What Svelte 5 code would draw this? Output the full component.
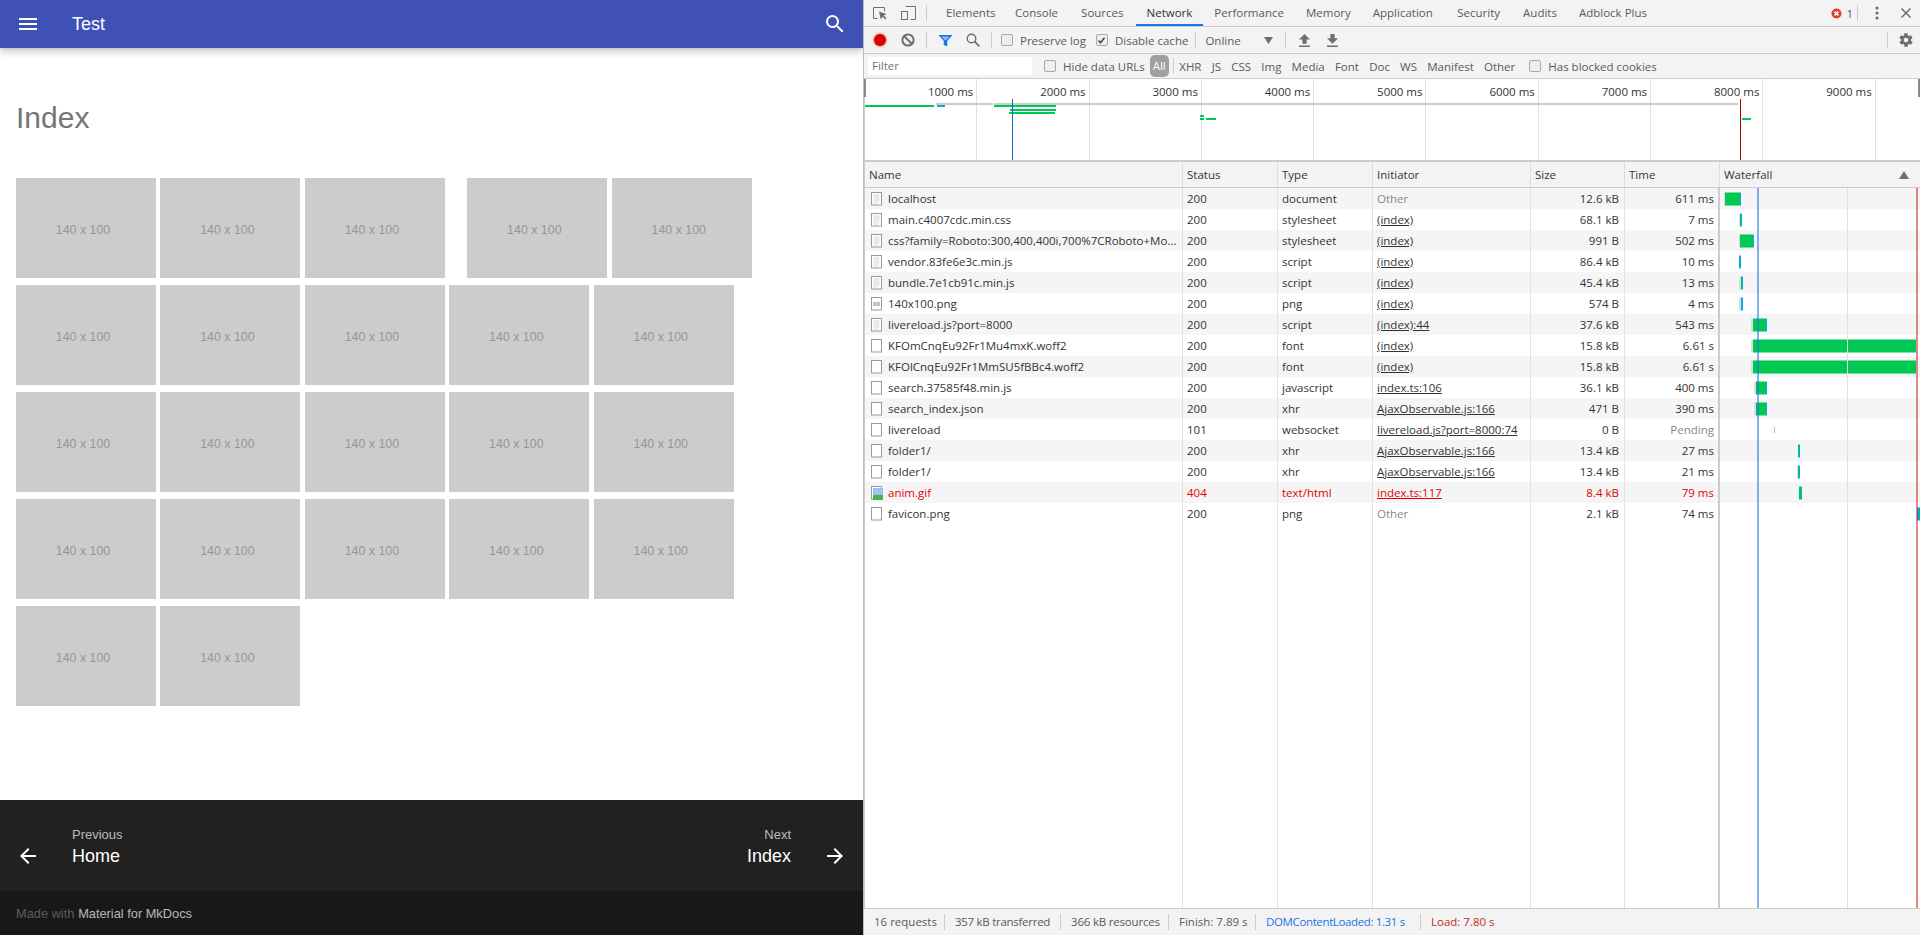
<script lang="ts">
	const tileRows = [5, 5, 5, 5, 2];

	const tabs = ['Elements', 'Console', 'Sources', 'Network', 'Performance', 'Memory', 'Application', 'Security', 'Audits', 'Adblock Plus'];
	const filters = ['XHR', 'JS', 'CSS', 'Img', 'Media', 'Font', 'Doc', 'WS', 'Manifest', 'Other'];
	const ticks = [1000, 2000, 3000, 4000, 5000, 6000, 7000, 8000, 9000];

	const green = '#00c853';
	const blue = '#03a9f4';
	const wait = '#dcdcdc';

	// overview strips, in pixels from the left of the overview
	const strips = [
		{ x: 0, y: 26, w: 69, h: 2, c: green },
		{ x: 72, y: 26, w: 8, h: 2, c: '#12a9d8' },
		{ x: 129, y: 26, w: 62, h: 2, c: green },
		{ x: 145, y: 30, w: 46, h: 2, c: green },
		{ x: 144, y: 33, w: 46, h: 2, c: green },
		{ x: 335, y: 36, w: 4, h: 2, c: green },
		{ x: 335, y: 39, w: 4, h: 2, c: green },
		{ x: 341, y: 39, w: 10, h: 2, c: green },
		{ x: 877, y: 39, w: 9, h: 2, c: green },
	];

	// waterfall segments: left, width, colour (and height when not a full bar)
	const rows = [
		{ name: 'localhost', status: '200', type: 'document', init: 'Other', size: '12.6 kB', time: '611 ms', icon: 'doc', bars: [[4, 2, wait], [5, 15, green], [20, 1, blue]] },
		{ name: 'main.c4007cdc.min.css', status: '200', type: 'stylesheet', init: '(index)', size: '68.1 kB', time: '7 ms', icon: 'doc', bars: [[19, 1, wait], [20, 1, green], [21, 1, blue]] },
		{ name: 'css?family=Roboto:300,400,400i,700%7CRoboto+Mo...', status: '200', type: 'stylesheet', init: '(index)', size: '991 B', time: '502 ms', icon: 'doc', bars: [[19, 1, wait], [20, 13, green], [33, 1, blue]] },
		{ name: 'vendor.83fe6e3c.min.js', status: '200', type: 'script', init: '(index)', size: '86.4 kB', time: '10 ms', icon: 'doc', bars: [[19, 2, blue]] },
		{ name: 'bundle.7e1cb91c.min.js', status: '200', type: 'script', init: '(index)', size: '45.4 kB', time: '13 ms', icon: 'doc', bars: [[19, 2, wait], [21, 1, green], [22, 1, blue]] },
		{ name: '140x100.png', status: '200', type: 'png', init: '(index)', size: '574 B', time: '4 ms', icon: 'png', bars: [[19, 2, wait], [21, 2, blue]] },
		{ name: 'livereload.js?port=8000', status: '200', type: 'script', init: '(index):44', size: '37.6 kB', time: '543 ms', icon: 'doc', bars: [[31, 2, wait], [33, 13, green], [46, 1, blue]] },
		{ name: 'KFOmCnqEu92Fr1Mu4mxK.woff2', status: '200', type: 'font', init: '(index)', size: '15.8 kB', time: '6.61 s', icon: 'blank', bars: [[31, 2, wait], [33, 163, green]] },
		{ name: 'KFOlCnqEu92Fr1MmSU5fBBc4.woff2', status: '200', type: 'font', init: '(index)', size: '15.8 kB', time: '6.61 s', icon: 'blank', bars: [[31, 2, wait], [33, 163, green]] },
		{ name: 'search.37585f48.min.js', status: '200', type: 'javascript', init: 'index.ts:106', size: '36.1 kB', time: '400 ms', icon: 'blank', bars: [[34, 2, wait], [36, 10, green], [46, 1, blue]] },
		{ name: 'search_index.json', status: '200', type: 'xhr', init: 'AjaxObservable.js:166', size: '471 B', time: '390 ms', icon: 'blank', bars: [[34, 2, wait], [36, 10, green], [46, 1, blue]] },
		{ name: 'livereload', status: '101', type: 'websocket', init: 'livereload.js?port=8000:74', size: '0 B', time: 'Pending', icon: 'blank', bars: [[54, 1, '#bbb', 6]] },
		{ name: 'folder1/', status: '200', type: 'xhr', init: 'AjaxObservable.js:166', size: '13.4 kB', time: '27 ms', icon: 'blank', bars: [[78, 1, green], [79, 1, blue]] },
		{ name: 'folder1/', status: '200', type: 'xhr', init: 'AjaxObservable.js:166', size: '13.4 kB', time: '21 ms', icon: 'blank', bars: [[77, 1, wait], [78, 1, green], [79, 1, blue]] },
		{ name: 'anim.gif', status: '404', type: 'text/html', init: 'index.ts:117', size: '8.4 kB', time: '79 ms', icon: 'img', bars: [[79, 2, green], [81, 1, blue]], error: true },
		{ name: 'favicon.png', status: '200', type: 'png', init: 'Other', size: '2.1 kB', time: '74 ms', icon: 'blank', bars: [[197, 3, '#00acc1']] },
	];

	const statusItems = ['16 requests', '357 kB transferred', '366 kB resources', 'Finish: 7.89 s'];
</script>

<div class="screen">
	<section class="page">
		<header class="bar">
			<svg class="bar-icon" viewBox="0 0 24 24"><path d="M3 18h18v-2H3v2zm0-5h18v-2H3v2zm0-7v2h18V6H3z" /></svg>
			<span class="bar-title">Test</span>
			<svg class="bar-icon search" viewBox="0 0 24 24"><path d="M15.5 14h-.79l-.28-.27A6.47 6.47 0 0 0 16 9.5 6.5 6.5 0 1 0 9.5 16c1.61 0 3.09-.59 4.23-1.57l.27.28v.79l5 4.99L20.49 19l-4.99-5zm-6 0C7.01 14 5 11.99 5 9.5S7.01 5 9.5 5 14 7.01 14 9.5 11.99 14 9.5 14z" /></svg>
		</header>

		<main class="content">
			<h1>Index</h1>
			<div class="tiles">
				{#each tileRows as count, r}
					{#each Array(count) as _, i}
						<div class="tile" class:pushed={r === 0 && i === 3}>140 x 100</div>
					{/each}
				{/each}
			</div>
		</main>

		<footer>
			<nav class="pager">
				<div class="pager-link">
					<svg class="pager-icon" viewBox="0 0 24 24"><path d="M20 11H7.83l5.59-5.59L12 4l-8 8 8 8 1.41-1.41L7.83 13H20v-2z" /></svg>
					<div>
						<div class="pager-dir">Previous</div>
						<div class="pager-title">Home</div>
					</div>
				</div>
				<div class="pager-link right">
					<div>
						<div class="pager-dir">Next</div>
						<div class="pager-title">Index</div>
					</div>
					<svg class="pager-icon" viewBox="0 0 24 24"><path d="M12 4l-1.41 1.41L16.17 11H4v2h12.17l-5.58 5.59L12 20l8-8z" /></svg>
				</div>
			</nav>
			<div class="meta">Made with <span>Material for MkDocs</span></div>
		</footer>
	</section>

	<section class="devtools">
		<div class="tabbar">
			<div class="tb-btn">
				<svg width="16" height="16" viewBox="0 0 16 16" fill="none" stroke="#6e6e6e"><path d="M5.5 13.5h-4v-11h11v4" /><path d="M7 6.5l1.8 8 1.7-2.7 3 2.7 1-1-2.8-2.9 2.8-1.6z" fill="#6e6e6e" stroke="none" /></svg>
			</div>
			<div class="tb-btn">
				<svg width="17" height="16" viewBox="0 0 17 16" fill="none" stroke="#6e6e6e"><path d="M5.5 1.5h10v13h-5" /><rect x="1.5" y="6.5" width="6" height="8" /></svg>
			</div>
			<i class="sep tab-sep"></i>
			{#each tabs as tab}
				<div class="tab" class:active={tab === 'Network'}>{tab}</div>
			{/each}
			<div class="errors">
				<svg width="11" height="11" viewBox="0 0 11 11"><circle cx="5.5" cy="5.5" r="5" fill="#e53935" /><path d="M3.6 3.6l3.8 3.8M7.4 3.6l-3.8 3.8" stroke="#fff" stroke-width="1.6" /></svg>
				<span>1</span>
			</div>
			<i class="sep"></i>
			<div class="tb-btn dots">
				<svg width="4" height="14" viewBox="0 0 4 14" fill="#6e6e6e"><circle cx="2" cy="2" r="1.6" /><circle cx="2" cy="7" r="1.6" /><circle cx="2" cy="12" r="1.6" /></svg>
			</div>
			<div class="tb-btn">
				<svg width="12" height="12" viewBox="0 0 12 12" stroke="#6e6e6e" stroke-width="1.5"><path d="M1.5 1.5l9 9M10.5 1.5l-9 9" /></svg>
			</div>
		</div>

		<div class="toolbar">
			<div class="tb-btn"><span class="record"></span></div>
			<div class="tb-btn">
				<svg width="14" height="14" viewBox="0 0 14 14" fill="none" stroke="#6e6e6e" stroke-width="2"><circle cx="7" cy="7" r="5.6" /><path d="M3 3l8 8" /></svg>
			</div>
			<i class="sep"></i>
			<div class="tb-btn">
				<svg width="15" height="13" viewBox="0 0 15 13"><path d="M.5 1h14L9.2 7v5.5L5.8 11V7z" fill="#1a73e8" /><path d="M3.5 2.4h8L8.4 6H6.6z" fill="#8ab8f2" /></svg>
			</div>
			<div class="tb-btn">
				<svg width="14" height="14" viewBox="0 0 14 14" fill="none" stroke="#6e6e6e" stroke-width="1.4"><circle cx="5.5" cy="5.5" r="4.3" /><path d="M8.7 8.7l4.6 4.6" stroke-width="1.8" /></svg>
			</div>
			<i class="sep"></i>
			<span class="check first"></span><span class="check-label">Preserve log</span>
			<span class="check second"><svg width="9" height="9" viewBox="0 0 9 9" fill="none" stroke="#444" stroke-width="1.6"><path d="M1.5 4.5l2 2.2 4-5" /></svg></span><span class="check-label">Disable cache</span>
			<i class="sep after-cache"></i>
			<span class="throttle">Online<svg width="9" height="7" viewBox="0 0 9 7"><path d="M0 0h9L4.5 7z" fill="#6e6e6e" /></svg></span>
			<i class="sep"></i>
			<div class="tb-btn">
				<svg width="11" height="13" viewBox="0 0 11 13" fill="#6e6e6e"><path d="M5.5 0L11 5.5H7.6v4.3H3.4V5.5H0zM0 11.4h11V13H0z" /></svg>
			</div>
			<div class="tb-btn">
				<svg width="11" height="13" viewBox="0 0 11 13" fill="#6e6e6e"><path d="M5.5 9.8L11 4.3H7.6V0H3.4v4.3H0zM0 11.4h11V13H0z" /></svg>
			</div>
			<i class="sep push"></i>
			<div class="tb-btn">
				<svg width="16" height="16" viewBox="0 0 24 24" fill="#6e6e6e"><path d="M19.4 13a7.5 7.5 0 0 0 0-2l2.1-1.6a.5.5 0 0 0 .1-.6l-2-3.5a.5.5 0 0 0-.6-.2l-2.5 1a7.3 7.3 0 0 0-1.7-1l-.4-2.7a.5.5 0 0 0-.5-.4h-4a.5.5 0 0 0-.5.4l-.4 2.7a7.3 7.3 0 0 0-1.7 1l-2.5-1a.5.5 0 0 0-.6.2l-2 3.5a.5.5 0 0 0 .1.6L4.6 11a7.5 7.5 0 0 0 0 2l-2.1 1.6a.5.5 0 0 0-.1.6l2 3.5c.1.2.4.3.6.2l2.5-1a7.3 7.3 0 0 0 1.7 1l.4 2.7c0 .2.2.4.5.4h4c.3 0 .5-.2.5-.4l.4-2.7a7.3 7.3 0 0 0 1.7-1l2.5 1c.2.1.5 0 .6-.2l2-3.5a.5.5 0 0 0-.1-.6zM12 15.5a3.5 3.5 0 1 1 0-7 3.5 3.5 0 0 1 0 7z" /></svg>
			</div>
		</div>

		<div class="filterbar">
			<div class="filter-input">Filter</div>
			<span class="check"></span><span class="check-label">Hide data URLs</span>
			<span class="pill">All</span>
			<i class="sep"></i>
			<div class="filter-types">
				{#each filters as f}
					<span>{f}</span>
				{/each}
			</div>
			<span class="check"></span><span class="check-label">Has blocked cookies</span>
		</div>

		<div class="overview">
			{#each ticks as t, i}
				<div class="ov-tick" style="left: {i * 112.3}px; width: 112.3px">{t} ms</div>
			{/each}
			<span class="ov-rule" style="left: 71px; width: 57px"></span>
			<span class="ov-rule" style="left: 129px; width: 744px"></span>
			{#each strips as s}
				<span class="ov-strip" style="left: {s.x}px; top: {s.y}px; width: {s.w}px; height: {s.h}px; background: {s.c}"></span>
			{/each}
			<span class="ov-line dcl"></span>
			<span class="ov-line load"></span>
			<span class="ov-handle"></span>
			<span class="ov-handle end"></span>
		</div>

		<div class="thead">
			<div>Name</div>
			<div>Status</div>
			<div>Type</div>
			<div>Initiator</div>
			<div>Size</div>
			<div>Time</div>
			<div class="wf-head">Waterfall<svg width="10" height="8" viewBox="0 0 10 8"><path d="M0 8h10L5 0z" fill="#6e6e6e" /></svg></div>
		</div>

		<div class="tbody">
			{#each rows as row}
				<div class="row" class:error={row.error}>
					<div class="cell name">
						<svg class="file" width="13" height="15" viewBox="0 0 13 15">
							<rect x="1.5" y="1.5" width="10" height="12.5" fill="#fff" stroke="#9a9a9a" />
							{#if row.icon === 'doc'}
								<path d="M3.5 4h6M3.5 6h6M3.5 8h6M3.5 10h6M3.5 12h4" stroke="#d4d4d4" />
							{:else if row.icon === 'png'}
								<rect x="3" y="6" width="7" height="4" fill="#c4c4c4" />
							{:else if row.icon === 'img'}
								<rect x="3" y="3" width="10" height="8" fill="#9cc4ec" />
								<rect x="3" y="10" width="10" height="5" fill="#4caf50" />
							{/if}
						</svg>
						<span>{row.name}</span>
					</div>
					<div class="cell">{row.status}</div>
					<div class="cell">{row.type}</div>
					<div class="cell" class:other={row.init === 'Other'}><span class:link={row.init !== 'Other'}>{row.init}</span></div>
					<div class="cell num">{row.size}</div>
					<div class="cell num" class:other={row.time === 'Pending'}>{row.time}</div>
					<div class="cell wf">
						{#each row.bars as b}
							<span class="wf-bar" style="left: {b[0]}px; width: {b[1]}px; height: {b[3] ?? 13}px; background: {b[2]}"></span>
						{/each}
					</div>
				</div>
			{/each}
			<div class="col-lines">
				<i></i><i></i><i></i><i></i><i></i><i></i>
				<i class="wf-lines">
					<b class="wf-grid"></b>
					<b class="wf-dcl"></b>
					<b class="wf-load"></b>
				</i>
			</div>
		</div>

		<div class="status">
			{#each statusItems as item}
				<span class="status-item">{item}</span>
			{/each}
			<span class="status-item dcl-text">DOMContentLoaded: 1.31 s</span>
			<span class="status-item load-text">Load: 7.80 s</span>
		</div>
	</section>
</div>

<style>
	:global(body) {
		margin: 0;
		background: #fff;
	}

	.screen {
		display: flex;
		width: 1920px;
		height: 935px;
		overflow: hidden;
	}

	/* left: the docs page */
	.page {
		width: 863px;
		flex: none;
		display: flex;
		flex-direction: column;
		font-family: 'Liberation Sans', Arial, sans-serif;
		position: relative;
	}

	.bar {
		height: 48px;
		flex: none;
		background: #3f51b5;
		display: flex;
		align-items: center;
		padding: 0 16px;
		color: #fff;
		box-shadow: 0 0 4px rgba(0, 0, 0, 0.1), 0 4px 8px rgba(0, 0, 0, 0.2);
		position: relative;
		z-index: 1;
	}

	.bar-icon {
		width: 24px;
		height: 24px;
		fill: #fff;
	}

	.bar-icon.search {
		margin-left: auto;
	}

	.bar-title {
		margin-left: 32px;
		font-size: 18px;
	}

	.content {
		flex: 1;
		padding: 0 16px;
	}

	h1 {
		margin: 53px 0 0;
		height: 77px;
		font-size: 30px;
		line-height: 34px;
		font-weight: 400;
		color: #757575;
	}

	.tiles {
		display: flex;
		flex-wrap: wrap;
		gap: 7px 4.45px;
	}

	.tile {
		width: 140px;
		height: 100px;
		background: #ccc;
		color: #969696;
		font-size: 12.4px;
		display: flex;
		align-items: center;
		justify-content: center;
		padding: 3px 6px 0 0;
		box-sizing: border-box;
	}

	.tile.pushed {
		margin-left: 18px;
	}

	.pager {
		height: 91px;
		background: #212121;
		display: flex;
		justify-content: space-between;
		align-items: center;
		padding: 4px 16px 0;
		box-sizing: border-box;
		color: #fff;
	}

	.pager-link {
		display: flex;
		align-items: flex-end;
		gap: 32px;
	}

	.pager-link.right {
		text-align: right;
	}

	.pager-icon {
		width: 24px;
		height: 24px;
		fill: #fff;
		margin-bottom: 1px;
	}

	.pager-dir {
		font-size: 13px;
		line-height: 16px;
		color: rgba(255, 255, 255, 0.7);
	}

	.pager-title {
		font-size: 18px;
		line-height: 26px;
	}

	.meta {
		height: 44px;
		background: #181818;
		padding: 0 16px;
		display: flex;
		align-items: center;
		gap: 0.3em;
		font-size: 12.8px;
		color: rgba(255, 255, 255, 0.3);
	}

	.meta span {
		color: rgba(255, 255, 255, 0.7);
	}

	/* right: devtools */
	.devtools {
		flex: 1;
		min-width: 0;
		border-left: 1px solid #bbb;
		display: flex;
		flex-direction: column;
		font-family: 'Open Sans', 'Noto Sans', sans-serif;
		font-size: 11.5px;
		color: #333;
		background: #fff;
		position: relative;
		z-index: 2;
	}

	.tabbar,
	.toolbar,
	.filterbar {
		flex: none;
		display: flex;
		align-items: center;
		background: #f3f3f3;
		border-bottom: 1px solid #ccc;
		color: #5a5a5a;
		box-sizing: border-box;
	}

	.tabbar {
		height: 27px;
		padding-left: 2px;
	}

	.toolbar {
		height: 27px;
		padding-left: 2px;
	}

	.filterbar {
		height: 25px;
		padding-left: 4px;
	}

	.tb-btn {
		width: 28px;
		height: 26px;
		flex: none;
		display: grid;
		place-items: center;
	}

	.sep {
		width: 1px;
		height: 16px;
		flex: none;
		background: #ccc;
		margin: 0 4px;
	}

	.tab-sep {
		margin-right: 8px;
	}

	.tab {
		height: 26px;
		line-height: 26px;
		padding: 0 11px;
		box-sizing: border-box;
	}

	/* the browser's text is a touch narrower or wider per word than ours */
	.tab:nth-child(4) {
		padding-right: 8.6px;
	}

	.tab:nth-child(5),
	.tab:nth-child(6) {
		padding-right: 12px;
	}

	.tab:nth-child(11) {
		margin-left: 2.5px;
	}

	.tab:nth-child(12) {
		margin-left: 1px;
	}

	.tab.active {
		color: #333;
		border-bottom: 2px solid #1a73e8;
	}

	.errors {
		margin-left: auto;
		display: flex;
		align-items: center;
		gap: 4px;
		color: #5a5a5a;
	}

	.dots {
		width: 30px;
	}

	.record {
		width: 12px;
		height: 12px;
		border-radius: 50%;
		background: #e00000;
		box-shadow: 0 0 2px 1px rgba(220, 0, 0, 0.35);
	}

	.check {
		width: 10px;
		height: 10px;
		flex: none;
		border: 1px solid #a8a8a8;
		border-radius: 2px;
		background: #eee;
		margin-right: 7px;
		display: grid;
		place-items: center;
	}

	.check.first {
		margin-left: 5px;
	}

	.check.second {
		margin-left: 10px;
	}

	.check-label {
		white-space: nowrap;
	}

	.after-cache {
		margin-left: 7px;
	}

	.throttle {
		width: 76px;
		margin-left: 5px;
		display: flex;
		align-items: center;
		justify-content: space-between;
		padding-right: 8px;
		box-sizing: border-box;
	}

	.push {
		margin-left: auto;
	}

	.filter-input {
		width: 164px;
		height: 18px;
		line-height: 18px;
		background: #fff;
		color: #757575;
		padding-left: 4px;
		box-sizing: border-box;
		margin-right: 12px;
	}

	.pill {
		margin-left: 5px;
		width: 19px;
		height: 22px;
		line-height: 22px;
		text-align: center;
		background: #a0a0a0;
		border-radius: 5px;
		color: #fff;
	}

	.filter-types {
		display: flex;
		gap: 10.2px;
		margin-left: 1.5px;
		margin-right: 14px;
	}

	.overview {
		height: 81px;
		flex: none;
		position: relative;
		border-left: 1px solid #ccc;
		border-bottom: 2px solid #ccc;
		background: #fff;
	}

	.ov-tick {
		position: absolute;
		top: 0;
		bottom: 0;
		box-sizing: border-box;
		border-right: 1px solid #e0e0e0;
		text-align: right;
		padding: 5px 3px 0 0;
		line-height: 16px;
		color: #333;
	}

	.ov-rule {
		position: absolute;
		top: 24px;
		height: 2px;
		background: #ccc;
	}

	.ov-strip {
		position: absolute;
	}

	.ov-line {
		position: absolute;
		top: 20px;
		bottom: 0;
		width: 1px;
	}

	.ov-line.dcl {
		left: 147px;
		background: #1a5fc8;
	}

	.ov-line.load {
		left: 875px;
		background: #a80000;
	}

	.ov-handle {
		position: absolute;
		left: -1px;
		top: 0;
		width: 2px;
		height: 18px;
		background: #888;
	}

	.ov-handle.end {
		left: auto;
		right: 0;
	}

	.thead,
	.row,
	.col-lines {
		display: grid;
		grid-template-columns: 318px 95px 95px 158px 94px 95px 1fr;
	}

	.thead {
		height: 26px;
		flex: none;
		border-left: 1px solid #ccc;
		border-bottom: 1px solid #ccc;
		background: #f3f3f3;
		box-sizing: border-box;
		line-height: 25px;
		color: #333;
	}

	.thead > div {
		padding-left: 4px;
		border-right: 1px solid #ddd;
		box-sizing: border-box;
	}

	.thead > div:last-child {
		border-right: 0;
	}

	.wf-head {
		display: flex;
		align-items: center;
		justify-content: space-between;
		padding-right: 11px;
	}

	.tbody {
		flex: 1;
		position: relative;
		border-left: 1px solid #ccc;
		min-height: 0;
	}

	.row {
		height: 21px;
		line-height: 21px;
	}

	.row:nth-child(odd) {
		background: #f5f5f5;
	}

	.row.error {
		color: #e60000;
	}

	.cell {
		padding: 0 4px;
		white-space: nowrap;
		overflow: hidden;
		box-sizing: border-box;
	}

	.cell.name {
		display: flex;
		align-items: center;
		gap: 5px;
		padding-left: 5px;
	}

	.cell.num {
		text-align: right;
		padding-right: 6px;
	}

	.other {
		color: #888;
	}

	.link {
		text-decoration: underline;
	}

	.cell.wf {
		position: relative;
		overflow: visible;
		padding: 0;
	}

	.wf-bar {
		position: absolute;
		top: 50%;
		transform: translateY(-50%);
	}

	.col-lines {
		position: absolute;
		inset: 0;
		pointer-events: none;
	}

	.col-lines i {
		border-right: 1px solid #e2e2e2;
		box-sizing: border-box;
	}

	.col-lines i:nth-child(6) {
		border-right: 2px solid #ccc;
	}

	.col-lines .wf-lines {
		border: 0;
		position: relative;
	}

	.wf-lines b {
		position: absolute;
		top: 0;
		bottom: 0;
	}

	.wf-grid {
		left: 127px;
		width: 1px;
		background: #e0e0e0;
	}

	.wf-dcl {
		left: 37px;
		width: 2px;
		background: rgba(26, 115, 232, 0.55);
	}

	.wf-load {
		left: 196px;
		width: 2px;
		background: rgba(200, 40, 40, 0.55);
	}

	.status {
		height: 27px;
		flex: none;
		display: flex;
		align-items: center;
		background: #f3f3f3;
		border-top: 1px solid #ccc;
		box-sizing: border-box;
		color: #5a5a5a;
	}

	.status-item {
		padding-left: 10px;
		height: 16px;
		line-height: 16px;
		border-right: 1px solid #ccc;
		box-sizing: border-box;
		white-space: nowrap;
	}

	.status-item:nth-child(1) {
		width: 81px;
	}

	.status-item:nth-child(2) {
		width: 116px;
		letter-spacing: -0.28px;
	}

	.status-item:nth-child(3) {
		width: 108px;
		letter-spacing: -0.2px;
	}

	.status-item:nth-child(4) {
		width: 87px;
	}

	.dcl-text {
		width: 165px;
		color: #1a73e8;
		letter-spacing: -0.37px;
	}

	.load-text {
		color: #c62828;
		border-right: 0;
	}
</style>
